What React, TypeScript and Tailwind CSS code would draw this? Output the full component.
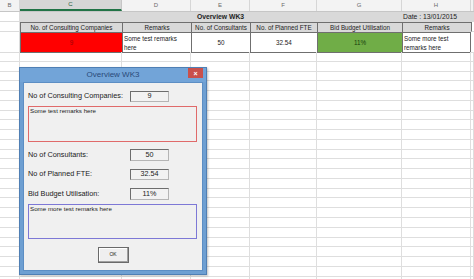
import React from 'react';

const GRID = 'grid grid-cols-[20px_102px_69px_59px_67px_85px_69px_1fr]';
const font = { fontFamily: '"Liberation Sans", Arial, sans-serif' };

function HeaderRow() {
  const letters = ['B', 'C', 'D', 'E', 'F', 'G', 'H', ''];
  return (
    <div className={`${GRID} h-[12px] bg-[#f3f3f3] border-b border-[#c6c6c6]`}>
      {letters.map((l, i) => (
        <div
          key={i}
          className={
            l === 'C'
              ? 'flex items-center justify-center border-r border-[#c6c6c6] bg-[#d6d6d6] border-b-2 border-b-[#217346] text-[6px] text-[#1e5e3a]'
              : 'flex items-center justify-center border-r border-[#d6d6d6] text-[6px] text-[#6a6a6a]'
          }
        >
          {l}
        </div>
      ))}
    </div>
  );
}

function TitleRow() {
  return (
    <div className={`${GRID} h-[10px] text-[6.8px] text-[#222]`}>
      <div className="border-r border-b border-[#dcdcdc]" />
      <div className="bg-[#d9d9d9]" />
      <div className="bg-[#d9d9d9]" />
      <div className="bg-[#d9d9d9] flex items-center justify-center whitespace-nowrap font-bold overflow-visible">
        Overview WK3
      </div>
      <div className="bg-[#d9d9d9]" />
      <div className="bg-[#d9d9d9]" />
      <div className="bg-[#d9d9d9] flex items-center pl-[1px] whitespace-nowrap">Date : 13/01/2015</div>
      <div className="bg-[#d9d9d9]" />
    </div>
  );
}

function ColumnTitles() {
  const titles = [
    'No. of Consulting Companies',
    'Remarks',
    'No. of Consultants',
    'No. of Planned FTE',
    'Bid Budget Utilisation',
    'Remarks',
  ];
  return (
    <div className={`${GRID} h-[10px] text-[6.3px] text-[#222]`}>
      <div className="border-r border-b border-[#dcdcdc]" />
      {titles.map((t, i) => (
        <div
          key={i}
          className="bg-[#d9d9d9] border-t border-l border-[#6f6f6f] flex items-center justify-center whitespace-nowrap overflow-hidden"
        >
          {t}
        </div>
      ))}
      <div className="border-l border-[#6f6f6f] border-b border-b-[#dcdcdc]" />
    </div>
  );
}

function DataRow() {
  return (
    <div className={`${GRID} h-[20px] text-[6.3px] text-[#222] leading-[9px]`}>
      <div className="border-r border-b border-[#dcdcdc]" />
      <div className="bg-[#ff0000] border border-r-0 border-[#6f6f6f] flex items-center justify-center text-[#9c0006]">9</div>
      <div className="border border-r-0 border-[#6f6f6f] pl-[1px] pt-[1px]">Some test remarks here</div>
      <div className="border border-r-0 border-[#6f6f6f] flex items-center justify-center">50</div>
      <div className="border border-r-0 border-[#6f6f6f] flex items-center justify-center">32.54</div>
      <div className="bg-[#70ad47] border border-r-0 border-[#6f6f6f] flex items-center justify-center text-[#17400c]">11%</div>
      <div className="border border-[#6f6f6f] pl-[1px] pt-[1px]">Some more test remarks here</div>
      <div className="border-b border-[#dcdcdc]" />
    </div>
  );
}

function EmptyRows() {
  const rows = Array.from({ length: 24 });
  return (
    <>
      {rows.map((_, r) => (
        <div key={r} className={`${GRID} h-[9.77px]`}>
          {Array.from({ length: 8 }).map((__, c) => (
            <div key={c} className="border-r border-b border-[#dedede]" />
          ))}
        </div>
      ))}
    </>
  );
}

function Field({ label, value, className }: { label: string; value: string; className: string }) {
  return (
    <div className={`flex items-center ${className}`}>
      <span className="w-[102px] text-[7.3px] text-[#1a1a1a] whitespace-nowrap">{label}</span>
      <div className="w-[39px] h-full flex items-center justify-center border border-t-[#6d6d6d] border-l-[#6d6d6d] border-b-[#b5b5b5] border-r-[#b5b5b5] bg-[#f2f2f2] text-[7.2px] text-[#1a1a1a]">
        {value}
      </div>
    </div>
  );
}

function Dialog() {
  return (
    <div
      className="absolute left-[19px] top-[67px] w-[188px] h-[208px] bg-[#6e9fd2] border border-[#4f7fb4] flex flex-col shadow-[1px_1px_2px_rgba(0,0,0,0.25)]"
      style={font}
    >
      <div className="relative h-[14px] flex items-center justify-center text-[8px] text-[#2a4a78] bg-[#72a4d8]">
        Overview WK3
        <div className="absolute right-[3px] top-0 w-[15px] h-[10px] bg-[#c9504b] flex items-center justify-center text-white text-[7px] font-bold leading-none">
          ×
        </div>
      </div>
      <div className="flex-1 mx-[3px] mb-[3px] bg-[#f0f0f0] border border-[#5c8ec4] pl-[4px] pr-[5px] flex flex-col">
        <Field label="No of Consulting Companies:" value="9" className="mt-[8px] h-[11px]" />
        <div className="mt-[4px] h-[36px] border border-[#e06a6a] bg-[#f0f0f0] text-[6.2px] text-[#1a1a1a] pl-[1px] leading-[8px]">
          Some test remarks here
        </div>
        <Field label="No of Consultants:" value="50" className="mt-[7px] h-[12px]" />
        <Field label="No of Planned FTE:" value="32.54" className="mt-[8px] h-[11px]" />
        <Field label="Bid Budget Utilisation:" value="11%" className="mt-[8px] h-[12px]" />
        <div className="mt-[4px] h-[35px] border border-[#7d78d6] bg-[#f0f0f0] text-[6.2px] text-[#1a1a1a] pl-[1px] leading-[8px]">
          Some more test remarks here
        </div>
        <div className="mt-[8px] flex justify-center pl-[1px]">
          <div className="w-[31px] h-[16px] border border-[#6a6a6a] bg-[#efefef] shadow-[inset_-1px_-1px_0_#a0a0a0,inset_1px_1px_0_#ffffff] flex items-center justify-center text-[5px] text-[#222]">
            OK
          </div>
        </div>
      </div>
    </div>
  );
}

export default function App() {
  return (
    <div className="relative w-[474px] h-[279px] overflow-hidden bg-white" style={font}>
      <HeaderRow />
      <TitleRow />
      <ColumnTitles />
      <DataRow />
      <EmptyRows />
      <Dialog />
    </div>
  );
}
